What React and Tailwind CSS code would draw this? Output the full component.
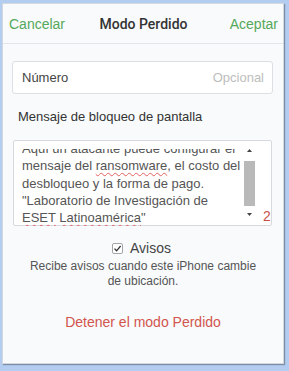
import React from "react";

const font = { fontFamily: '"Liberation Sans", Arial, Helvetica, sans-serif' };

function Sp({ children }) {
  return (
    <span className="underline decoration-wavy decoration-[#e06060] decoration-1 underline-offset-[2px]">
      {children}
    </span>
  );
}

export default function App() {
  return (
    <div
      className="w-[289px] h-[371px] bg-[#b3cdf1] pt-[3px] pl-[2px]"
      style={font}
    >
      <div className="w-[282px] h-[361px] bg-[#f8fafc] border border-[#d3d8df] shadow-[1px_1px_1px_rgba(0,0,0,0.3)] flex flex-col">
        {/* header */}
        <div className="h-[40px] shrink-0 border-b border-[#e2e5e9] grid grid-cols-[1fr_auto_1fr] items-center pl-[6px] pr-[5px]">
          <span className="text-[14px] text-[#55a85a] leading-none">Cancelar</span>
          <span className="text-[14px] font-medium text-[#333] leading-none font-['Roboto',sans-serif]">
            Modo Perdido
          </span>
          <span className="text-[14px] text-[#55a85a] leading-none justify-self-end">Aceptar</span>
        </div>

        {/* number input */}
        <div className="mt-[17px] ml-[9px] w-[261px] h-[33px] shrink-0 bg-white border border-[#dcdfe4] rounded-[3px] flex items-center justify-between pl-[9px] pr-[8px]">
          <span className="text-[13px] text-[#444]">Número</span>
          <span className="text-[13px] text-[#bdbdbd]">Opcional</span>
        </div>

        {/* label */}
        <div className="mt-[15px] pl-[15px] text-[13px] leading-[16px] text-[#333]">
          Mensaje de bloqueo de pantalla
        </div>

        {/* textarea */}
        <div className="mt-[15px] ml-[10px] w-[259px] h-[86px] shrink-0 bg-white border border-[#d6d9de] rounded-[2px] flex">
          <div className="flex-1 pl-[8px] pt-[8px]">
            <div className="h-[77px] overflow-hidden">
              <div className="mt-[-9px] text-[13px] leading-[17.3px] text-[#555] whitespace-nowrap">
                <div>Aquí un atacante puede configurar el</div>
                <div>
                  mensaje del <Sp>ransomware</Sp>, el costo del
                </div>
                <div>desbloqueo y la forma de pago.</div>
                <div>"Laboratorio de Investigación de</div>
                <div>
                  <Sp>ESET</Sp> <Sp>Latinoamérica</Sp>"
                </div>
              </div>
            </div>
          </div>
          {/* scrollbar */}
          <div className="w-[11px] flex flex-col items-center pt-[7px] pb-[8px]">
            <svg width="7" height="5" viewBox="0 0 7 5" className="shrink-0">
              <path d="M3.5 1 L6 4 L1 4 Z" fill="#444" />
            </svg>
            <div className="mt-[8px] w-[11px] h-[45px] bg-[#b9b9b9]" />
            <div className="flex-1" />
            <svg width="7" height="5" viewBox="0 0 7 5" className="shrink-0">
              <path d="M1 1 L6 1 L3.5 4 Z" fill="#444" />
            </svg>
          </div>
          <div className="w-[16px] flex items-end pl-[8px] pb-[1px]">
            <span className="text-[14px] leading-[16px] text-[#c9504a]">2</span>
          </div>
        </div>

        {/* checkbox */}
        <div className="mt-[13px] flex items-center justify-center gap-[7px] pr-[3px]">
          <div className="w-[11px] h-[11px] border border-[#a5a5a5] rounded-[2px] bg-white flex items-center justify-center">
            <svg width="9" height="9" viewBox="0 0 9 9">
              <path d="M1.5 4.6 L3.6 6.8 L7.6 2" fill="none" stroke="#333" strokeWidth="1.3" />
            </svg>
          </div>
          <span className="text-[14px] leading-[18px] text-[#444]">Avisos</span>
        </div>
        <div className="mt-[2px] text-center text-[12px] leading-[15px] text-[#555]">
          Recibe avisos cuando este iPhone cambie
          <br />
          de ubicación.
        </div>

        {/* stop */}
        <div className="mt-[24px] text-center text-[14px] leading-[18px] text-[#d2554e]">
          Detener el modo Perdido
        </div>
      </div>
    </div>
  );
}
